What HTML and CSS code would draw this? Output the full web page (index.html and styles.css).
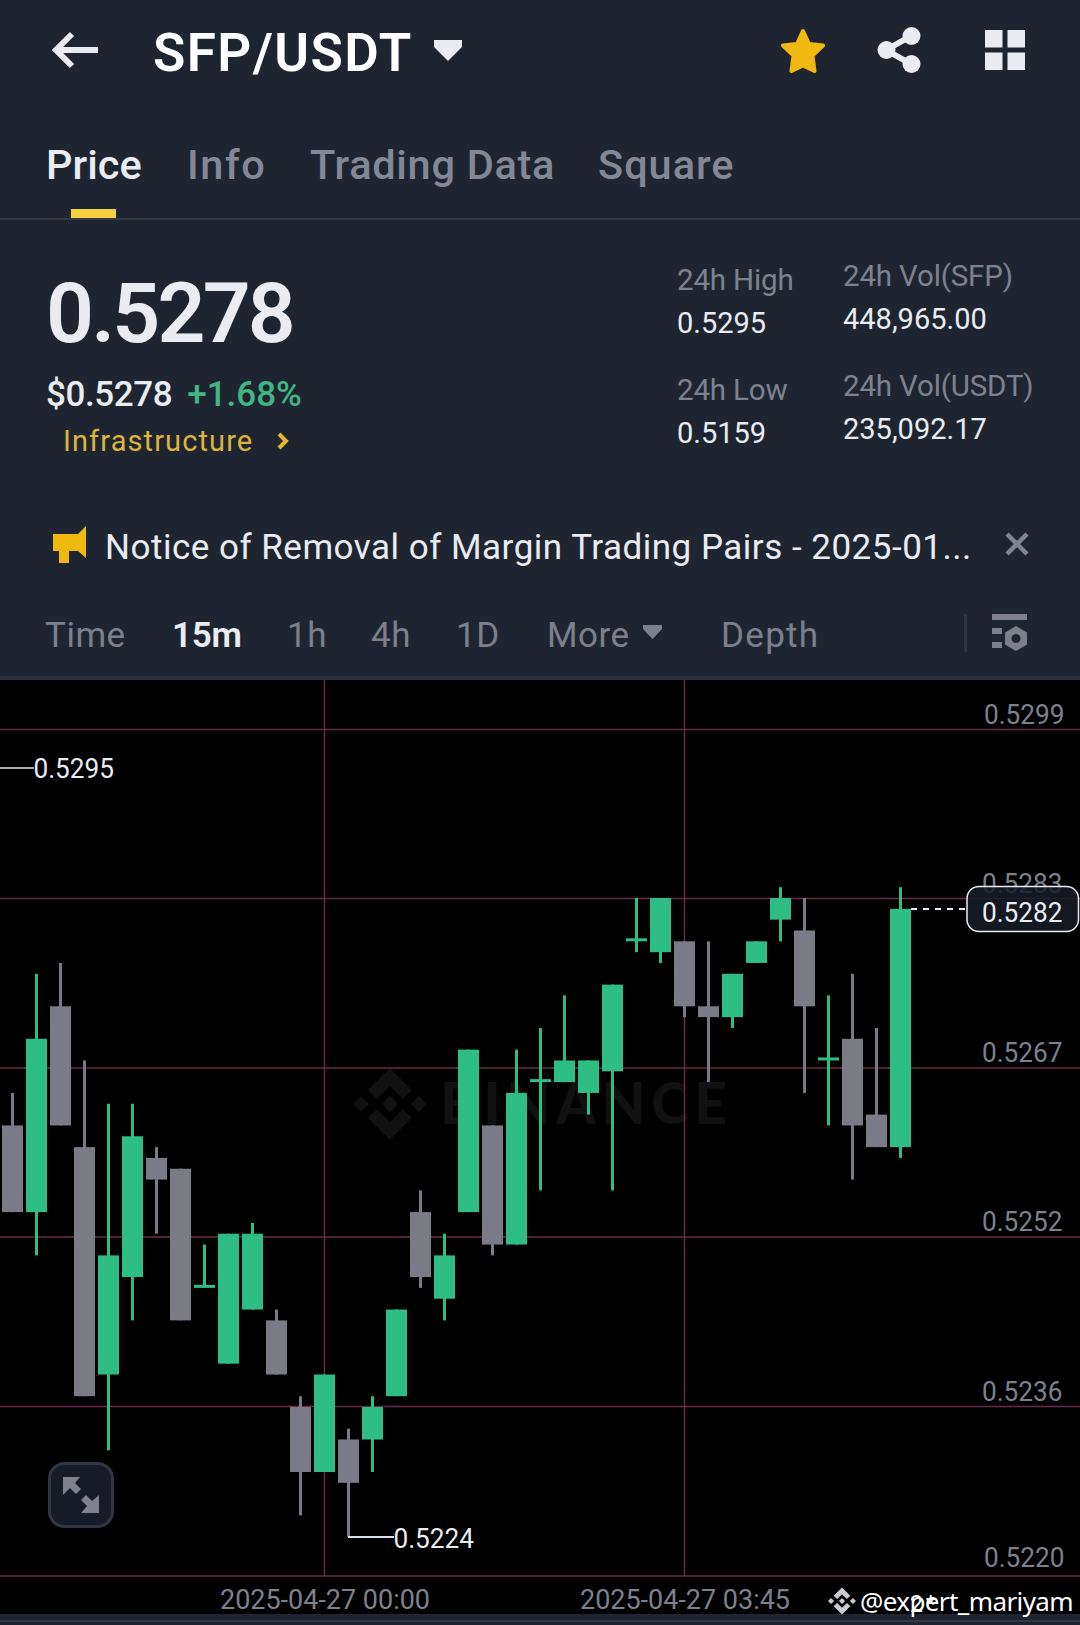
FILE: index.html
```html
<!DOCTYPE html>
<html lang="en">
  <head>
    <meta charset="utf-8" />
    <title>SFP/USDT</title>
    <link rel="stylesheet" href="styles.css" />
  </head>
  <body>
    <header class="topbar">
      <svg class="back" width="48" height="38" viewBox="0 0 48 38">
        <path d="M47 19H5M21 3L5 19l16 16" />
      </svg>
      <h1 class="pair">SFP/USDT</h1>
      <svg class="caret" width="28" height="22" viewBox="0 0 28 22">
        <path d="M0 1h28v7L14 22 0 8z" />
      </svg>
      <div class="actions">
        <svg width="46" height="48" viewBox="0 0 46 48">
          <path
            class="star"
            d="M22 5l6 13 14 1.500-10.500 10L33.500 45 22 39.500 10.500 45l2-15.500L2 19.500 16 18z"
          />
        </svg>
        <svg class="share" width="44" height="46" viewBox="0 0 44 46">
          <path d="M34 9L9 23l25 14" />
          <circle cx="34.5" cy="9" r="9" />
          <circle cx="9.5" cy="23" r="9" />
          <circle cx="34.5" cy="37" r="9" />
        </svg>
        <svg width="40" height="40" viewBox="0 0 40 40">
          <path
            fill="#eaecf2"
            d="M0 0h17.5v17.5H0zM22.5 0H40v17.5H22.5zM0 22.5h17.5V40H0zM22.5 22.5H40V40H22.5z"
          />
        </svg>
      </div>
    </header>

    <nav class="tabs">
      <a class="tab active">Price</a>
      <a class="tab info">Info</a>
      <a class="tab data">Trading Data</a>
      <a class="tab square">Square</a>
    </nav>

    <section class="summary">
      <div class="quote">
        <div class="last-price">0.5278</div>
        <div class="fiat">
          <span class="usd">$0.5278</span>
          <span class="change">+1.68%</span>
        </div>
        <div class="category">
          <span>Infrastructure</span>
          <svg width="12" height="18" viewBox="0 0 12 18">
            <path d="M2 2l7 7-7 7" />
          </svg>
        </div>
      </div>
      <div class="stats">
        <div class="stat-label">24h High</div>
        <div class="stat-value">0.5295</div>
        <div class="stat-label">24h Low</div>
        <div class="stat-value">0.5159</div>
      </div>
      <div class="stats volume">
        <div class="stat-label">24h Vol(SFP)</div>
        <div class="stat-value">448,965.00</div>
        <div class="stat-label">24h Vol(USDT)</div>
        <div class="stat-value">235,092.17</div>
      </div>
    </section>

    <section class="notice">
      <svg class="horn" width="33" height="37" viewBox="0 0 33 37">
        <path d="M0 8h25l8-8v32l-8-7H16v12H6V25H0z" />
      </svg>
      <span class="notice-text"
        >Notice of Removal of Margin Trading Pairs - 2025-01...</span
      >
      <svg class="close" width="24" height="24" viewBox="0 0 24 24">
        <path d="M2 2l20 20M22 2L2 22" />
      </svg>
    </section>

    <nav class="intervals">
      <a>Time</a>
      <a class="current">15m</a>
      <a>1h</a>
      <a>4h</a>
      <a>1D</a>
      <a class="more"
        >More
        <svg width="19" height="14" viewBox="0 0 19 14">
          <path fill="#7d808b" d="M0 0h19v4l-9.500 10L0 4z" /></svg
      ></a>
      <a class="depth">Depth</a>
      <div class="settings">
        <svg width="35" height="38" viewBox="0 0 35 38">
          <path fill="#7d808b" d="M0 0h35v6H0zM0 14h10v6H0zM0 28h10v6H0z" />
          <path
            fill="#7d808b"
            fill-rule="evenodd"
            d="M24 12l11 6.500v12L24 37l-11-6.500v-12zM24 20a4.500 4.500 0 1 0 .01 0z"
          />
        </svg>
      </div>
    </nav>

    <main class="chart">
      <svg id="plot" width="1080" height="934" viewBox="0 680 1080 934">
        <defs>
          <g id="bnb">
            <path
              d="M0-36L22-14 13-5 0-18-13-5-22-14zM0 36L22 14 13 5 0 18-13 5-22 14zM0-8L8 0 0 8-8 0zM-29-8L-21 0-29 8-37 0zM29-8L37 0 29 8 21 0z"
            />
          </g>
        </defs>
        <g fill="#111112">
          <use href="#bnb" transform="translate(390 1104)" />
          <text class="brand" x="440" y="1124" textLength="287">BINANCE</text>
        </g>
        <g id="grid"></g>
        <g id="candles"></g>

        <path class="marker" stroke="#a9abb2" d="M0 768h34" />
        <text class="peak" x="33.500" y="778">0.5295</text>
        <path class="marker" stroke="#d5e0ea" d="M348 1537h46" />
        <text class="peak" x="393.500" y="1548">0.5224</text>

        <g id="axis"></g>
        <path
          d="M911 909h56"
          stroke="#eaecf2"
          stroke-width="2"
          stroke-dasharray="6 6"
        />
        <rect class="pill" x="967" y="886.500" width="111.500" height="45" rx="12" />
        <text class="peak" x="982" y="922">0.5282</text>

        <text class="date" x="220" y="1609">2025-04-27 00:00</text>
        <text class="date" x="580" y="1609">2025-04-27 03:45</text>

        <rect class="expand" x="49.500" y="1463.500" width="63" height="63" rx="15" />
        <path
          fill="#7f828c"
          d="M63 1477h17l-5 6 6 6-5 5-6-6-7 7zM99 1513H81l6-7-6-6 5-5 6 6 7-6z"
        />
      </svg>
      <div class="author">
        <svg width="28" height="28" viewBox="-37 -37 74 74">
          <use href="#bnb" fill="#c9cbd1" />
        </svg>
        <span>@expert_mariyam</span>
        <span class="clipped">2*</span>
      </div>
    </main>
    <footer class="panel-edge"></footer>

    <script src="chart.js"></script>
  </body>
</html>
```

FILE: styles.css
```css
body {
  margin: 0;
  width: 1080px;
  height: 1625px;
  overflow: hidden;
  background-color: #1f2530;
  color: #eaecf2;
  font-family: Roboto, "Liberation Sans", sans-serif;
}

svg {
  display: block;
  flex: none;
}

/* header */
.topbar {
  display: flex;
  align-items: center;
  box-sizing: border-box;
  height: 106px;
  padding: 0 55px 6px 51px;
}

.back path {
  fill: none;
  stroke: #eaecf2;
  stroke-width: 6;
}

.pair {
  margin: 6px 0 0 54px;
  width: 281px;
  font-size: 53px;
  font-weight: 600;
  line-height: 60px;
  letter-spacing: 1.4px;
  color: #fff;
}

.caret {
  fill: #eaecf2;
}

.actions {
  display: flex;
  align-items: center;
  margin-left: auto;
}

.actions svg + svg {
  margin-left: 50px;
}

.actions svg:last-child {
  margin-left: 64px;
}

.star {
  fill: #f0b90f;
  stroke: #f0b90f;
  stroke-width: 4;
  stroke-linejoin: round;
}

.share {
  fill: #eaecf2;
}

.share path {
  fill: none;
  stroke: #eaecf2;
  stroke-width: 6;
}

/* tabs */
.tabs {
  display: grid;
  grid-template-columns: 140px 123px 288px 1fr;
  box-sizing: border-box;
  height: 114px;
  padding: 34px 0 0 47px;
  border-bottom: 2px solid #313842;
}

.tab {
  font-size: 41.5px;
  font-weight: 500;
  line-height: 50px;
  letter-spacing: 0.7px;
  color: #848894;
}

.tab.info {
  letter-spacing: 1.6px;
}

.tab.square {
  letter-spacing: 1px;
}

.tab.active {
  margin-left: -1px;
  letter-spacing: 0;
  color: #eaecf2;
}

.tab.active::after {
  content: "";
  display: block;
  width: 45px;
  height: 9px;
  margin: 19px 0 0 25px;
  background-color: #f5d13e;
}

/* price and 24h numbers */
.summary {
  display: flex;
  height: 280px;
}

.quote {
  width: 631px;
  padding: 46px 0 0 46px;
}

.last-price {
  font-size: 84px;
  font-weight: 600;
  line-height: 96px;
  letter-spacing: -2.8px;
}

.fiat {
  display: flex;
  gap: 15px;
  margin-top: 13px;
  font-size: 35px;
  font-weight: 500;
  line-height: 40px;
}

.usd {
  letter-spacing: -0.4px;
}

.change {
  color: #41b683;
}

.category {
  display: flex;
  align-items: center;
  gap: 24px;
  margin: 9px 0 0 17px;
  font-size: 29px;
  line-height: 34px;
  letter-spacing: 1.1px;
  color: #ddb43e;
}

.category path {
  fill: none;
  stroke: #e5b52a;
  stroke-width: 4;
}

.stats {
  width: 166px;
  padding-top: 42px;
}

.stats.volume {
  width: auto;
  padding-top: 38px;
}

.stat-label {
  font-size: 29.5px;
  line-height: 36px;
  letter-spacing: -0.15px;
  color: #7e828d;
}

.stat-value {
  margin: 7px 0 31px;
  font-size: 29px;
  line-height: 36px;
}

/* notice */
.notice {
  display: flex;
  align-items: center;
  height: 94px;
  padding: 0 51px 0 53px;
}

.horn {
  margin-bottom: 6px;
  fill: #f0b90f;
}

.notice-text {
  flex: 1;
  padding-left: 19px;
  font-size: 35px;
  letter-spacing: 0.5px;
  white-space: nowrap;
}

.close {
  margin-bottom: 6px;
}

.close path {
  stroke: #80838d;
  stroke-width: 4.5;
}

/* intervals */
.intervals {
  display: grid;
  grid-template-columns: 127px 115px 84px 85px 91px 174px 243px auto;
  align-items: center;
  height: 82px;
  padding-left: 45px;
  border-bottom: 4px solid #2a303c;
  font-size: 35px;
  letter-spacing: 0.5px;
  color: #7d808b;
}

.intervals .current {
  font-weight: 600;
  letter-spacing: -0.3px;
  color: #eaecf2;
}

.more {
  display: flex;
  align-items: center;
  gap: 13px;
}

.more svg {
  margin-bottom: 6px;
}

.depth {
  letter-spacing: 1.3px;
}

.settings {
  margin-bottom: 4px;
  padding-left: 25px;
  border-left: 3px solid #30363f;
}

/* chart */
.chart {
  position: relative;
  height: 934px;
  background-color: #000;
}

#plot {
  overflow: visible;
}

.grid-line {
  stroke: #682c4a;
  stroke-width: 1.5;
}

.up {
  fill: #2ebd85;
}

.down {
  fill: #7b7b87;
}

.marker {
  stroke-width: 2;
}

.peak,
.axis-label,
.date {
  font-size: 27px;
}

.peak {
  fill: #eaecf2;
}

.axis-label,
.date {
  fill: #7d818c;
}

.brand {
  font-family: Lato, sans-serif;
  font-size: 57px;
  font-weight: 900;
}

.pill {
  fill: #161c27;
  fill-opacity: 0.85;
  stroke: #eaecf2;
  stroke-width: 1.5;
}

.expand {
  fill: #161c27;
  stroke: #2f3642;
  stroke-width: 3;
}

.author {
  position: absolute;
  right: 7px;
  bottom: -7px;
  display: flex;
  align-items: center;
  gap: 4px;
  font-family: "Noto Sans", sans-serif;
  font-size: 26px;
  line-height: 40px;
  letter-spacing: -0.6px;
  color: #fff;
}

.clipped {
  position: absolute;
  left: 82px;
  top: 4px;
  font-family: Roboto, sans-serif;
  font-size: 23px;
  letter-spacing: 3px;
}

.panel-edge {
  height: 6px;
  border-bottom: 2px solid #313842;
}
```

FILE: chart.js
```js
const SVG = "http://www.w3.org/2000/svg";

// [open/close top, open/close bottom, high, low, up] in ticks below 0.5283
const candles = [
  [21, 29, 18, 29, 0],
  [13, 29, 7, 33, 1],
  [10, 21, 6, 21, 0],
  [23, 46, 15, 46, 0],
  [33, 44, 19, 51, 1],
  [22, 35, 19, 39, 1],
  [24, 26, 23, 31, 0],
  [25, 39, 25, 39, 0],
  [36, 36, 32, 36, 1],
  [31, 43, 31, 43, 1],
  [31, 38, 30, 38, 1],
  [39, 44, 38, 44, 0],
  [47, 53, 46, 57, 0],
  [44, 53, 44, 53, 1],
  [50, 54, 49, 59, 0],
  [47, 50, 46, 53, 1],
  [38, 46, 38, 46, 1],
  [29, 35, 27, 36, 0],
  [33, 37, 31, 39, 1],
  [14, 29, 14, 29, 1],
  [21, 32, 21, 33, 0],
  [18, 32, 14, 32, 1],
  [17, 17, 12, 27, 1],
  [15, 17, 9, 17, 1],
  [15, 18, 15, 20, 1],
  [8, 16, 8, 27, 1],
  [4, 4, 0, 5, 1],
  [0, 5, 0, 6, 1],
  [4, 10, 4, 11, 0],
  [10, 11, 4, 17, 0],
  [7, 11, 7, 12, 1],
  [4, 6, 4, 6, 1],
  [0, 2, -1, 4, 1],
  [3, 10, 0, 18, 0],
  [15, 15, 9, 21, 1],
  [13, 21, 7, 26, 0],
  [20, 23, 12, 23, 0],
  [1, 23, -1, 24, 1],
];

const rows = [
  [729.5, "0.5299", 984, 724],
  [898.5, "0.5283", 982, 893],
  [1068, "0.5267", 982, 1062],
  [1237, "0.5252", 982, 1231],
  [1406.5, "0.5236", 982, 1401],
  [1576, "0.5220", 984, 1567],
];

function add(parent, name, attrs, text) {
  const el = document.createElementNS(SVG, name);
  for (const key in attrs) el.setAttribute(key, attrs[key]);
  if (text) el.textContent = text;
  document.getElementById(parent).appendChild(el);
}

const tickY = (t) => 898 + t * 10.83;

rows.forEach(([y, label, x, base]) => {
  add("grid", "line", { class: "grid-line", x1: 0, x2: 1080, y1: y, y2: y });
  add("axis", "text", { class: "axis-label", x: x, y: base }, label);
});
[324.5, 684.5].forEach((x) => {
  add("grid", "line", { class: "grid-line", x1: x, x2: x, y1: 680, y2: 1576 });
});

candles.forEach(([top, bottom, high, low, up], i) => {
  const x = 2 + i * 24;
  const cls = up ? "up" : "down";
  // a flat candle is drawn as a thin bar sitting on its price
  const y = top === bottom ? tickY(top) - 3 : tickY(top);
  const h = Math.max(3, tickY(bottom) - tickY(top));
  add("candles", "rect", { class: cls, x: x + 9, y: tickY(high), width: 3, height: tickY(low) - tickY(high) });
  add("candles", "rect", { class: cls, x: x, y: y, width: 21, height: h });
});

// keep every number on the plot the same width
document.querySelectorAll(".peak, .axis-label, .date").forEach((el) => {
  el.setAttribute("textLength", el.classList.contains("date") ? 210 : 80.5);
  el.setAttribute("lengthAdjust", "spacingAndGlyphs");
});
```
